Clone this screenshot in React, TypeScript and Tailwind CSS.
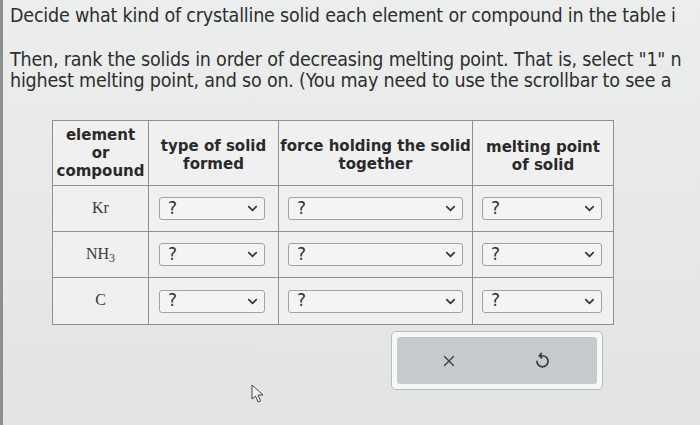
import React from "react";
import { X, ChevronDown } from "lucide-react";

const rows = [
  { id: "kr", label: <>Kr</> },
  {
    id: "nh3",
    label: (
      <>
        NH<sub className="text-[12px] relative top-[3px]">3</sub>
      </>
    ),
  },
  { id: "c", label: <>C</> },
];

const Select = ({ w }: { w: string }) => (
  <div
    className={`${w} h-[23px] flex items-center justify-between pl-[8px] pr-[4px] bg-[#f3f4f3] border border-[#9fa3a2] rounded-[3px] text-[17px] text-[#333]`}
  >
    <span>?</span>
    <ChevronDown className="w-[15px] h-[15px] text-[#333]" strokeWidth={2.6} />
  </div>
);

export default function App() {
  return (
    <div
      className="w-[700px] h-[425px] overflow-hidden bg-gradient-to-b from-[#eceeed] to-[#e2e4e3] border-l-[3px] border-[#8d8f8e] text-[#2e2e2e] relative"
      style={{ fontFamily: '"DejaVu Sans", Verdana, sans-serif' }}
    >
      <div className="pl-[7px] pt-[5px] text-[19.5px] tracking-[-0.2px] leading-[22px] whitespace-nowrap [font-stretch:condensed]">
        <p>Decide what kind of crystalline solid each element or compound in the table i</p>
        <p className="mt-[22px]">
          Then, rank the solids in order of decreasing melting point. That is, select "1" n
        </p>
        <p className="-mt-[1px]">highest melting point, and so on. (You may need to use the scrollbar to see a</p>
      </div>

      <div className="ml-[49px] mt-[28px] w-[562px] border border-[#8e918f] bg-[#eff0ef]">
        <div className="grid grid-cols-[96px_130px_194px_1fr] h-[65px] border-b border-[#8e918f] font-bold text-[15px] leading-[18px] text-[#2a2a2a] text-center">
          <div className="border-r border-[#8e918f] flex items-center justify-center">
            element
            <br />
            or
            <br />
            compound
          </div>
          <div className="border-r border-[#8e918f] pt-[16px]">
            type of solid
            <br />
            formed
          </div>
          <div className="border-r border-[#8e918f] pt-[16px]">
            force holding the solid
            <br />
            together
          </div>
          <div className="pt-[17px]">
            melting point
            <br />
            of solid
          </div>
        </div>
        {rows.map((r, i) => (
          <div
            key={r.id}
            className={`grid grid-cols-[96px_130px_194px_1fr] h-[46px] ${i < 2 ? "border-b border-[#8e918f]" : ""}`}
          >
            <div
              className="border-r border-[#8e918f] flex items-start justify-center pt-[10px] text-[16px] text-[#3a3a3a]"
              style={{ fontFamily: '"Liberation Serif", "Times New Roman", serif' }}
            >
              <span>{r.label}</span>
            </div>
            <div className="border-r border-[#8e918f] flex items-center px-[10px]">
              <Select w="w-[106px]" />
            </div>
            <div className="border-r border-[#8e918f] flex items-center px-[9px]">
              <Select w="w-[176px]" />
            </div>
            <div className="flex items-center px-[9px]">
              <Select w="w-[120px]" />
            </div>
          </div>
        ))}
      </div>

      <div className="ml-[388px] mt-[6px] w-[212px] h-[59px] rounded-[5px] bg-[#f6f7f7] border border-[#b7bcbc] p-[5px]">
        <div className="w-full h-full rounded-[3px] bg-[#c5cbcc] flex items-center justify-around pl-[6px] pr-[8px]">
          <X className="w-[18px] h-[18px] text-[#3b4040]" strokeWidth={1.8} />
          <svg
            width="19"
            height="19"
            viewBox="0 0 24 24"
            fill="none"
            stroke="#3b4040"
            strokeWidth="2.2"
            strokeLinecap="round"
            strokeLinejoin="round"
          >
            <path d="M8.5 6 H12 A7 7 0 1 1 5 13" />
            <path d="M10.5 3 L8 6 L10.8 8.5" />
          </svg>
        </div>
      </div>

      <svg
        className="absolute left-[248px] top-[384px]"
        width="14"
        height="20"
        viewBox="0 0 14 20"
      >
        <path
          d="M1 1 L1 15 L4.5 12 L7 18 L9.5 17 L7 11 L12 11 Z"
          fill="#f2f3f2"
          stroke="#444"
          strokeWidth="1"
          strokeLinejoin="round"
        />
      </svg>
    </div>
  );
}
